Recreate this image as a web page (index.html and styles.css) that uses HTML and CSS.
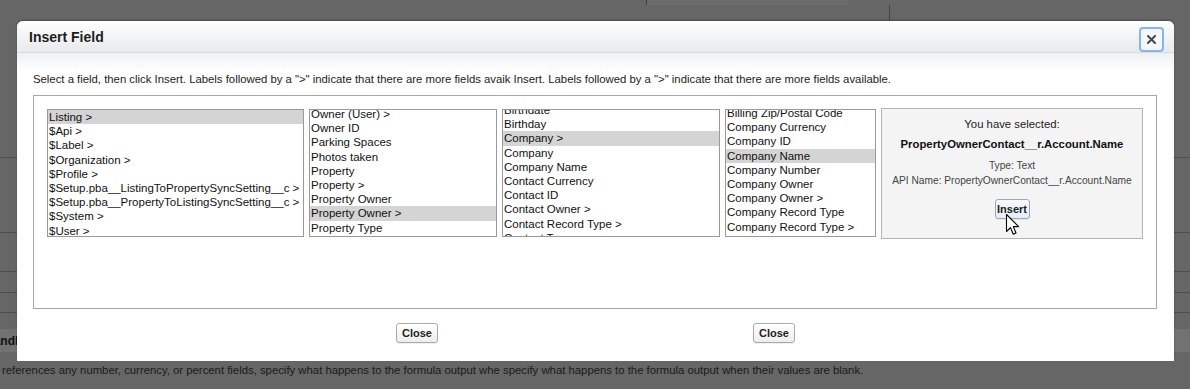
FILE: index.html
```html
<!DOCTYPE html>
<html>
<head>
<meta charset="utf-8">
<title>Insert Field</title>
<link rel="stylesheet" href="styles.css">
</head>
<body>
<div class="page">
  <div class="top-strip">
    <div class="ts-gap1"></div>
    <div class="ts-tab"></div>
    <div class="ts-gap2"></div>
    <div class="ts-line"></div>
  </div>
  <div class="bg-row r1"></div>
  <div class="bg-row r2"></div>
  <div class="bg-row r3"></div>
  <div class="bg-row r4"></div>
  <div class="bg-row r5"></div>
  <div class="bg-spacer"></div>
  <div class="section-head"><span>Handling</span></div>
  <p class="page-text">references any number, currency, or percent fields, specify what happens to the formula output whe specify what happens to the formula output when their values are blank.</p>
</div>

<div class="modal">
  <div class="modal-header">
    <h2 class="modal-title">Insert Field</h2>
    <button class="modal-x" type="button" aria-label="Close">
      <svg width="9" height="9" viewBox="0 0 9 9" xmlns="http://www.w3.org/2000/svg">
        <path d="M1 1 L8 8 M8 1 L1 8" stroke="#4a4a4a" stroke-width="2" stroke-linecap="square"/>
      </svg>
    </button>
  </div>
  <div class="modal-body">
    <p class="intro">Select a field, then click Insert. Labels followed by a "&gt;" indicate that there are more fields avaik Insert. Labels followed by a "&gt;" indicate that there are more fields available.</p>
    <div class="picker">
      <div class="lists">
        <div class="list l1">
          <ul class="items">
            <li class="sel">Listing &gt;</li>
            <li>$Api &gt;</li>
            <li>$Label &gt;</li>
            <li>$Organization &gt;</li>
            <li>$Profile &gt;</li>
            <li>$Setup.pba__ListingToPropertySyncSetting__c &gt;</li>
            <li>$Setup.pba__PropertyToListingSyncSetting__c &gt;</li>
            <li>$System &gt;</li>
            <li>$User &gt;</li>
          </ul>
        </div>
        <div class="list l2">
          <ul class="items off3">
            <li>Owner (User) &gt;</li>
            <li>Owner ID</li>
            <li>Parking Spaces</li>
            <li>Photos taken</li>
            <li>Property</li>
            <li>Property &gt;</li>
            <li>Property Owner</li>
            <li class="sel">Property Owner &gt;</li>
            <li>Property Type</li>
            <li>Rating</li>
          </ul>
        </div>
        <div class="list l3">
          <ul class="items off7">
            <li>Birthdate</li>
            <li>Birthday</li>
            <li class="sel">Company &gt;</li>
            <li>Company</li>
            <li>Company Name</li>
            <li>Contact Currency</li>
            <li>Contact ID</li>
            <li>Contact Owner &gt;</li>
            <li>Contact Record Type &gt;</li>
            <li>Contact Type</li>
          </ul>
        </div>
        <div class="list l4">
          <ul class="items off4">
            <li>Billing Zip/Postal Code</li>
            <li>Company Currency</li>
            <li>Company ID</li>
            <li class="sel">Company Name</li>
            <li>Company Number</li>
            <li>Company Owner</li>
            <li>Company Owner &gt;</li>
            <li>Company Record Type</li>
            <li>Company Record Type &gt;</li>
            <li>Created By</li>
          </ul>
        </div>
        <div class="panel">
          <p class="sel-label">You have selected:</p>
          <p class="sel-name">PropertyOwnerContact__r.Account.Name</p>
          <p class="sel-type">Type: Text</p>
          <p class="sel-api">API Name: PropertyOwnerContact__r.Account.Name</p>
          <button class="btn btn-insert" type="button">Insert</button>
        </div>
      </div>
    </div>
    <div class="footer">
      <button class="btn" type="button">Close</button>
      <button class="btn" type="button">Close</button>
    </div>
  </div>
</div>

<svg class="cursor" width="15" height="23" viewBox="0 0 15 23" xmlns="http://www.w3.org/2000/svg">
  <path d="M1.5 1.5 L1.5 18.5 L5.5 14.6 L8.3 21.2 L11 20 L8.3 13.6 L13.6 13.6 Z" fill="#fff" stroke="#000" stroke-width="1.1" stroke-linejoin="round"/>
</svg>
</body>
</html>
```

FILE: styles.css
```css
* { box-sizing: border-box; }

html, body {
  margin: 0;
  padding: 0;
}

body {
  width: 1190px;
  height: 389px;
  overflow: hidden;
  background: #666666;
  font-family: "Liberation Sans", Arial, Helvetica, sans-serif;
  position: relative;
}

/* ---------- dimmed page behind the dialog ---------- */
.page {
  width: 1190px;
  height: 389px;
  display: flex;
  flex-direction: column;
}

.top-strip {
  height: 21px;
  display: flex;
  flex-shrink: 0;
}
.ts-gap1 { width: 646px; }
.ts-tab {
  width: 202px;
  height: 5px;
  background: #6b6b6b;
  border-left: 1px solid #3f3f3f;
}
.ts-gap2 { width: 41px; }
.ts-line {
  width: 1px;
  height: 15px;
  margin-top: 5px;
  background: #444;
}

.bg-row {
  flex-shrink: 0;
  border-bottom: 1px solid #4e4e4e;
}
.r1 { height: 137px; }
.r2 { height: 75px; }
.r3 { height: 39px; }
.r4 { height: 21px; }
.r5 { height: 20px; }
.bg-spacer { height: 16px; flex-shrink: 0; }

.section-head {
  height: 23px;
  flex-shrink: 0;
  background: #727272;
  display: flex;
  align-items: center;
  overflow: hidden;
}
.section-head span {
  margin-left: -15px;
  font-weight: bold;
  font-size: 12px;
  color: #111;
}

.page-text {
  margin: 11px 0 0 2px;
  font-size: 11.34px;
  line-height: 14px;
  color: #1a1a1a;
  white-space: nowrap;
}

/* ---------- modal ---------- */
.modal {
  position: absolute;
  left: 17px;
  top: 21px;
  width: 1157px;
  height: 340px;
  background: #fff;
  border-radius: 6px;
  box-shadow: 0 -1px 2px rgba(0, 0, 0, 0.3);
  display: flex;
  flex-direction: column;
}

.modal-header {
  height: 32px;
  flex-shrink: 0;
  display: flex;
  justify-content: space-between;
  align-items: flex-start;
  padding: 0 10px 0 12px;
  background: linear-gradient(#fefefe, #e9eaec);
  border-bottom: 1px solid #d9dadc;
  border-radius: 6px 6px 0 0;
}

.modal-title {
  margin: 0;
  font-size: 14px;
  font-weight: bold;
  line-height: 32px;
  color: #1e1e1e;
}

.modal-x {
  width: 25px;
  height: 25px;
  margin-top: 6px;
  padding: 0;
  border: 2px solid #86b3f2;
  border-radius: 4px;
  background: #f4f6f9;
  display: flex;
  align-items: center;
  justify-content: center;
}

.modal-body {
  flex: 1;
  display: flex;
  flex-direction: column;
  padding: 19px 17px 18px 16px;
  background: linear-gradient(#eef0f2 0px, #ffffff 18px);
}

.intro {
  margin: 0;
  font-size: 11.34px;
  line-height: 14px;
  color: #222;
  white-space: nowrap;
}

.picker {
  margin-top: 9px;
  height: 214px;
  border: 1px solid #a6a6a6;
  padding: 13px 12px 13px 13px;
}

.lists {
  display: flex;
  gap: 5px;
  align-items: flex-start;
}

.list {
  height: 128px;
  border: 1px solid #9a9a9a;
  overflow: hidden;
  background: #fff;
  flex-shrink: 0;
}
.l1 { width: 257px; }
.l2 { width: 188px; }
.l3 { width: 218px; }
.l4 { width: 151px; }

.items {
  list-style: none;
  margin: 0;
  padding: 0;
}
.items li {
  font-size: 11.5px;
  line-height: 14.2px;
  height: 14.2px;
  padding-left: 1px;
  color: #111;
  white-space: nowrap;
}
.items li.sel { background: #d4d4d4; }

.off3 { margin-top: -3px; }
.off4 { margin-top: -4px; }
.off7 { margin-top: -7px; }

.panel {
  width: 262px;
  height: 131px;
  margin-top: -1px;
  border: 1px solid #b4b4b4;
  background: #f4f4f4;
  display: flex;
  flex-direction: column;
  align-items: center;
  padding-top: 8px;
  color: #222;
}
.panel p { margin: 0; white-space: nowrap; }
.sel-label { font-size: 11.34px; line-height: 14px; }
.sel-name {
  margin-top: 6px !important;
  font-size: 11.34px;
  font-weight: bold;
  line-height: 15px;
  color: #111;
}
.sel-type {
  margin-top: 7px !important;
  font-size: 10.2px;
  line-height: 14px;
  color: #444;
}
.sel-api {
  font-size: 10.2px;
  line-height: 15px;
  color: #444;
}

.btn {
  height: 20px;
  padding: 0 5px;
  border: 1px solid #a9a9a9;
  border-radius: 3px;
  background: linear-gradient(#ffffff, #ededed);
  font-family: "Liberation Sans", Arial, sans-serif;
  font-weight: bold;
  font-size: 11px;
  color: #222;
  box-shadow: 0 1px 0 rgba(0, 0, 0, 0.06);
}
.btn-insert {
  margin-top: 11px;
  width: 35px;
  padding: 0;
  background: linear-gradient(#f7fafd, #e4ecf5);
  border-color: #9fa9b4;
}

.footer {
  margin-top: 14px;
  display: flex;
  justify-content: center;
  gap: 315px;
  padding-left: 1px;
}
.footer .btn { width: 42px; padding: 0; }

/* ---------- pointer over the Insert button ---------- */
.cursor {
  position: absolute;
  left: 1005px;
  top: 213px;
}
```
